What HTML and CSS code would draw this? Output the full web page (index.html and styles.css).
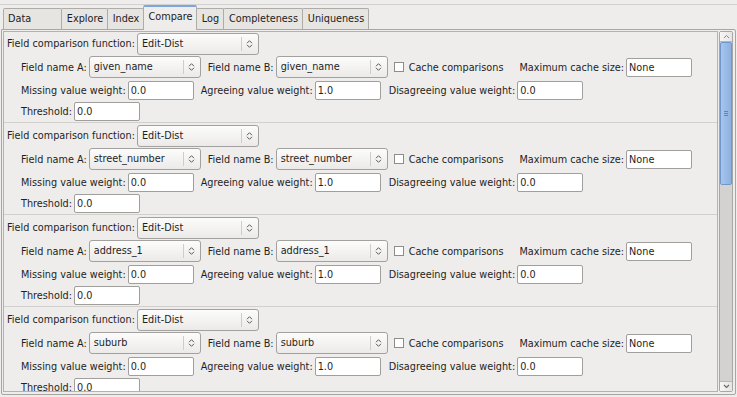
FILE: index.html
```html
<!DOCTYPE html>
<html>
<head>
<meta charset="utf-8">
<link rel="stylesheet" href="styles.css">
</head>
<body>
<div class="window">
  <div class="tabs">
    <div class="tab tab-data">Data</div>
    <div class="tab tab-explore">Explore</div>
    <div class="tab tab-index">Index</div>
    <div class="tab tab-compare active">Compare</div>
    <div class="tab tab-log">Log</div>
    <div class="tab tab-compl">Completeness</div>
    <div class="tab tab-uniq">Uniqueness</div>
  </div>
  <div class="panel">
    <div class="scroller">
      <div class="content">

        <section class="cmp">
          <div class="row row-title">
            <span class="lbl">Field comparison function:</span>
            <div class="combo combo-func"><span class="ctext">Edit-Dist</span><span class="carrow"><svg width="7" height="10" viewBox="0 0 7 10"><path d="M1 4.2 L3.5 1.7 L6 4.2 M1 5.8 L3.5 8.3 L6 5.8" fill="none" stroke="#5a5a5a" stroke-width="1"/></svg></span></div>
          </div>
          <div class="row row-names">
            <span class="lbl">Field name A:</span>
            <div class="combo combo-field"><span class="ctext">given_name</span><span class="carrow"><svg width="7" height="10" viewBox="0 0 7 10"><path d="M1 4.2 L3.5 1.7 L6 4.2 M1 5.8 L3.5 8.3 L6 5.8" fill="none" stroke="#5a5a5a" stroke-width="1"/></svg></span></div>
            <span class="lbl g-b">Field name B:</span>
            <div class="combo combo-field"><span class="ctext">given_name</span><span class="carrow"><svg width="7" height="10" viewBox="0 0 7 10"><path d="M1 4.2 L3.5 1.7 L6 4.2 M1 5.8 L3.5 8.3 L6 5.8" fill="none" stroke="#5a5a5a" stroke-width="1"/></svg></span></div>
            <span class="check"></span>
            <span class="lbl g-cache">Cache comparisons</span>
            <span class="lbl g-max">Maximum cache size:</span>
            <span class="input">None</span>
          </div>
          <div class="row row-weights">
            <span class="lbl">Missing value weight:</span>
            <span class="input">0.0</span>
            <span class="lbl g-agree">Agreeing value weight:</span>
            <span class="input">1.0</span>
            <span class="lbl g-dis">Disagreeing value weight:</span>
            <span class="input">0.0</span>
          </div>
          <div class="row row-thresh">
            <span class="lbl">Threshold:</span>
            <span class="input">0.0</span>
          </div>
        </section>

        <section class="cmp">
          <div class="row row-title">
            <span class="lbl">Field comparison function:</span>
            <div class="combo combo-func"><span class="ctext">Edit-Dist</span><span class="carrow"><svg width="7" height="10" viewBox="0 0 7 10"><path d="M1 4.2 L3.5 1.7 L6 4.2 M1 5.8 L3.5 8.3 L6 5.8" fill="none" stroke="#5a5a5a" stroke-width="1"/></svg></span></div>
          </div>
          <div class="row row-names">
            <span class="lbl">Field name A:</span>
            <div class="combo combo-field"><span class="ctext">street_number</span><span class="carrow"><svg width="7" height="10" viewBox="0 0 7 10"><path d="M1 4.2 L3.5 1.7 L6 4.2 M1 5.8 L3.5 8.3 L6 5.8" fill="none" stroke="#5a5a5a" stroke-width="1"/></svg></span></div>
            <span class="lbl g-b">Field name B:</span>
            <div class="combo combo-field"><span class="ctext">street_number</span><span class="carrow"><svg width="7" height="10" viewBox="0 0 7 10"><path d="M1 4.2 L3.5 1.7 L6 4.2 M1 5.8 L3.5 8.3 L6 5.8" fill="none" stroke="#5a5a5a" stroke-width="1"/></svg></span></div>
            <span class="check"></span>
            <span class="lbl g-cache">Cache comparisons</span>
            <span class="lbl g-max">Maximum cache size:</span>
            <span class="input">None</span>
          </div>
          <div class="row row-weights">
            <span class="lbl">Missing value weight:</span>
            <span class="input">0.0</span>
            <span class="lbl g-agree">Agreeing value weight:</span>
            <span class="input">1.0</span>
            <span class="lbl g-dis">Disagreeing value weight:</span>
            <span class="input">0.0</span>
          </div>
          <div class="row row-thresh">
            <span class="lbl">Threshold:</span>
            <span class="input">0.0</span>
          </div>
        </section>

        <section class="cmp">
          <div class="row row-title">
            <span class="lbl">Field comparison function:</span>
            <div class="combo combo-func"><span class="ctext">Edit-Dist</span><span class="carrow"><svg width="7" height="10" viewBox="0 0 7 10"><path d="M1 4.2 L3.5 1.7 L6 4.2 M1 5.8 L3.5 8.3 L6 5.8" fill="none" stroke="#5a5a5a" stroke-width="1"/></svg></span></div>
          </div>
          <div class="row row-names">
            <span class="lbl">Field name A:</span>
            <div class="combo combo-field"><span class="ctext">address_1</span><span class="carrow"><svg width="7" height="10" viewBox="0 0 7 10"><path d="M1 4.2 L3.5 1.7 L6 4.2 M1 5.8 L3.5 8.3 L6 5.8" fill="none" stroke="#5a5a5a" stroke-width="1"/></svg></span></div>
            <span class="lbl g-b">Field name B:</span>
            <div class="combo combo-field"><span class="ctext">address_1</span><span class="carrow"><svg width="7" height="10" viewBox="0 0 7 10"><path d="M1 4.2 L3.5 1.7 L6 4.2 M1 5.8 L3.5 8.3 L6 5.8" fill="none" stroke="#5a5a5a" stroke-width="1"/></svg></span></div>
            <span class="check"></span>
            <span class="lbl g-cache">Cache comparisons</span>
            <span class="lbl g-max">Maximum cache size:</span>
            <span class="input">None</span>
          </div>
          <div class="row row-weights">
            <span class="lbl">Missing value weight:</span>
            <span class="input">0.0</span>
            <span class="lbl g-agree">Agreeing value weight:</span>
            <span class="input">1.0</span>
            <span class="lbl g-dis">Disagreeing value weight:</span>
            <span class="input">0.0</span>
          </div>
          <div class="row row-thresh">
            <span class="lbl">Threshold:</span>
            <span class="input">0.0</span>
          </div>
        </section>

        <section class="cmp">
          <div class="row row-title">
            <span class="lbl">Field comparison function:</span>
            <div class="combo combo-func"><span class="ctext">Edit-Dist</span><span class="carrow"><svg width="7" height="10" viewBox="0 0 7 10"><path d="M1 4.2 L3.5 1.7 L6 4.2 M1 5.8 L3.5 8.3 L6 5.8" fill="none" stroke="#5a5a5a" stroke-width="1"/></svg></span></div>
          </div>
          <div class="row row-names">
            <span class="lbl">Field name A:</span>
            <div class="combo combo-field"><span class="ctext">suburb</span><span class="carrow"><svg width="7" height="10" viewBox="0 0 7 10"><path d="M1 4.2 L3.5 1.7 L6 4.2 M1 5.8 L3.5 8.3 L6 5.8" fill="none" stroke="#5a5a5a" stroke-width="1"/></svg></span></div>
            <span class="lbl g-b">Field name B:</span>
            <div class="combo combo-field"><span class="ctext">suburb</span><span class="carrow"><svg width="7" height="10" viewBox="0 0 7 10"><path d="M1 4.2 L3.5 1.7 L6 4.2 M1 5.8 L3.5 8.3 L6 5.8" fill="none" stroke="#5a5a5a" stroke-width="1"/></svg></span></div>
            <span class="check"></span>
            <span class="lbl g-cache">Cache comparisons</span>
            <span class="lbl g-max">Maximum cache size:</span>
            <span class="input">None</span>
          </div>
          <div class="row row-weights">
            <span class="lbl">Missing value weight:</span>
            <span class="input">0.0</span>
            <span class="lbl g-agree">Agreeing value weight:</span>
            <span class="input">1.0</span>
            <span class="lbl g-dis">Disagreeing value weight:</span>
            <span class="input">0.0</span>
          </div>
          <div class="row row-thresh">
            <span class="lbl">Threshold:</span>
            <span class="input">0.0</span>
          </div>
        </section>

      </div>
    </div>
    <div class="sb">
      <div class="sb-btn sb-up"><svg width="7" height="5" viewBox="0 0 7 5"><path d="M1 4 L3.5 1.5 L6 4" fill="none" stroke="#8a8a8a" stroke-width="1"/></svg></div>
      <div class="sb-thumb"><span class="grip"></span></div>
      <div class="sb-track"></div>
      <div class="sb-btn sb-down"><svg width="7" height="5" viewBox="0 0 7 5"><path d="M1 1 L3.5 3.5 L6 1" fill="none" stroke="#6a6a6a" stroke-width="1.2"/></svg></div>
    </div>
  </div>
</div>
</body>
</html>
```

FILE: styles.css
```css
* { box-sizing: border-box; }
html, body { margin: 0; padding: 0; }
body {
  width: 737px;
  height: 397px;
  overflow: hidden;
  background: #efedeb;
  font-family: "DejaVu Sans", sans-serif;
  font-size: 9.7px;
  color: #1e1e1e;
}
.window {
  padding-top: 4px;
  display: flex;
  flex-direction: column;
}
.tabs {
  display: flex;
  align-items: flex-end;
  height: 25px;
  border-top: 1px solid #d3d1cf;
  padding-left: 3px;
}
.tab {
  height: 21px;
  line-height: 20px;
  padding: 0 0 0 1px;
  text-align: center;
  border: 1px solid #aeaca9;
  border-bottom: none;
  margin-left: -1px;
  border-radius: 2px 2px 0 0;
  background: #e7e5e2;
  color: #222;
  white-space: nowrap;
}
.tab:first-child { margin-left: 0; }
.tab-data { width: 59px; text-align: left; padding-left: 4px; }
.tab-explore { width: 47px; }
.tab-index { width: 37px; }
.tab-compare { width: 54px; }
.tab-log { width: 28px; }
.tab-compl { width: 80px; }
.tab-uniq { width: 67px; }
.tab.active {
  height: 25px;
  margin-bottom: -1px;
  line-height: 19px;
  background: #efedeb;
  border-top: 2px solid #7ca7dc;
  position: relative;
  z-index: 2;
}
.panel {
  margin-left: 1px;
  width: 735px;
  height: 366px;
  border: 1px solid #a8a6a3;
  border-radius: 0 2px 2px 2px;
  display: flex;
  gap: 1px;
  padding: 1px 2px 2px 1px;
}
.scroller {
  flex: 1;
  border: 1px solid #b4b2af;
  overflow: hidden;
}
.content { margin-top: -1px; }
.cmp {
  height: 92px;
  border-bottom: 1px solid #d2d0cd;
  padding-left: 3px;
}
.row {
  display: flex;
  align-items: center;
  gap: 2px;
}
.row-title { height: 24px; padding-top: 1px; }
.row-names { height: 24px; padding-left: 14px; }
.row-weights { height: 22px; padding-left: 14px; }
.row-thresh { height: 21px; padding-left: 14px; }
.lbl { white-space: nowrap; }
.combo {
  height: 22px;
  display: flex;
  align-items: center;
  border: 1px solid #a3a19e;
  border-radius: 3px;
  background: linear-gradient(#fcfcfc, #ebeae8);
}
.combo-func { width: 122px; }
.combo-field { width: 112px; }
.ctext { flex: 1; padding-left: 4px; line-height: 14px; white-space: nowrap; }
.carrow {
  width: 17px;
  height: 14px;
  border-left: 1px solid #cfcdcb;
  display: flex;
  align-items: center;
  justify-content: center;
}
.carrow svg { display: block; }
.g-b { margin-left: 5px; }
.check {
  width: 10px;
  height: 10px;
  border: 1px solid #8e8c8a;
  background: #fff;
  margin-left: 4px;
}
.g-cache { margin-left: 3px; }
.g-max { margin-left: 14px; }
.g-agree { margin-left: 5px; }
.g-dis { margin-left: 6px; }
.input {
  width: 66px;
  height: 19px;
  line-height: 17px;
  border: 1px solid #a19f9c;
  border-radius: 2px;
  background: #fff;
  padding-left: 2px;
  white-space: nowrap;
}
.sb {
  width: 14px;
  border: 1px solid #a9a7a4;
  border-radius: 2px;
  display: flex;
  flex-direction: column;
  background: #d3d2d0;
}
.sb-btn {
  height: 10px;
  background: linear-gradient(90deg, #f7f6f5, #e6e5e3);
  display: flex;
  align-items: center;
  justify-content: center;
}
.sb-up { border-bottom: 1px solid #b9b7b4; }
.sb-down { border-top: 1px solid #b9b7b4; }
.sb-btn svg { display: block; }
.sb-thumb {
  height: 143px;
  background: linear-gradient(90deg, #a8c5ec, #8cb1e3);
  border: 1px solid #6f97ce;
  border-radius: 2px;
  display: flex;
  align-items: center;
  justify-content: center;
}
.grip {
  width: 4px;
  height: 5px;
  border-top: 1px solid #5f86bb;
  border-bottom: 1px solid #5f86bb;
  background: linear-gradient(#5f86bb, #5f86bb) center / 4px 1px no-repeat;
}
.sb-track { flex: 1; }
```
